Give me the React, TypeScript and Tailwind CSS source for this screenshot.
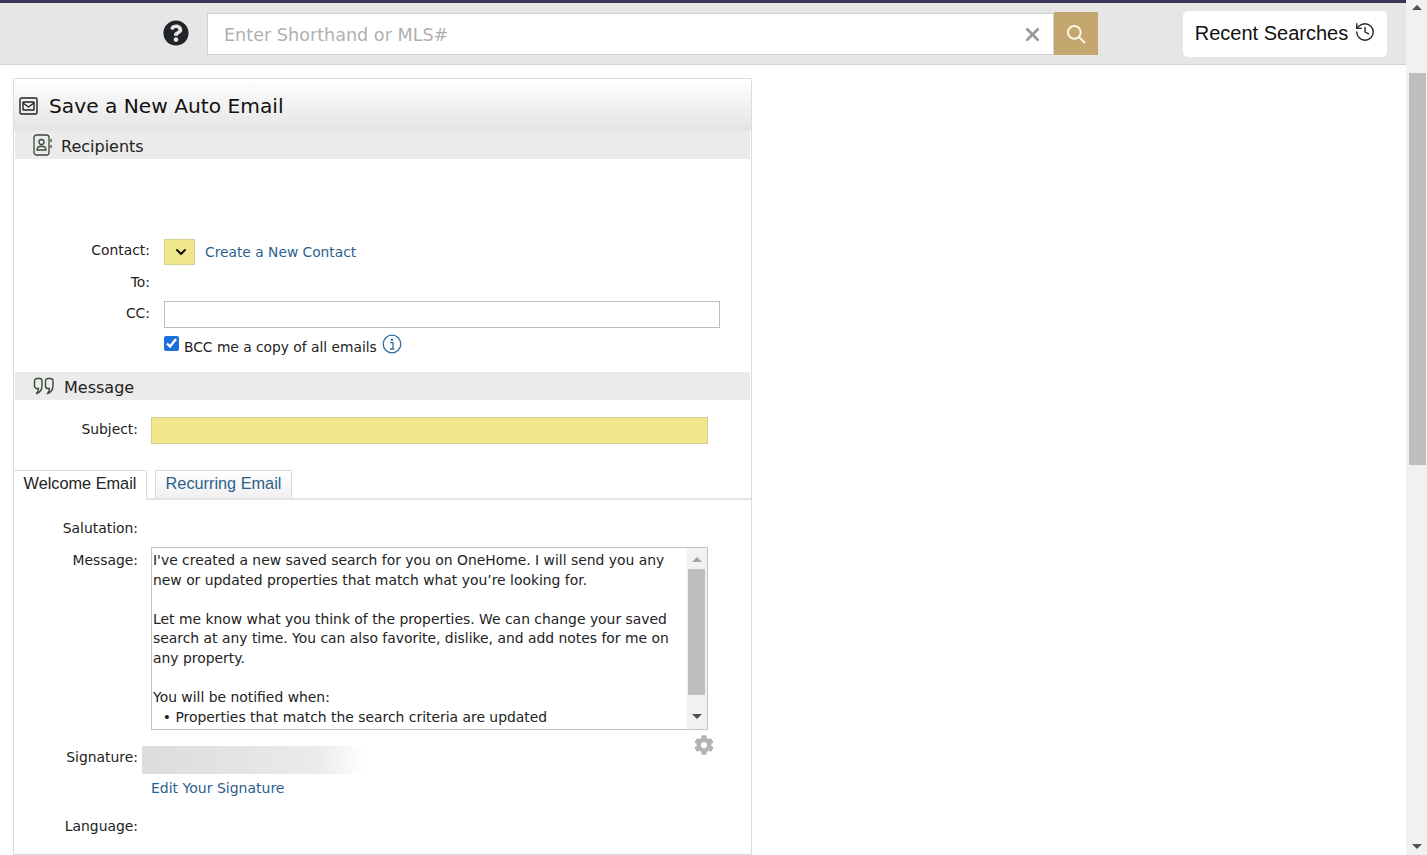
import { FaQuestionCircle, FaCog } from "react-icons/fa";
import { History, X, ChevronDown } from "lucide-react";

const verdana = "font-['DejaVu_Sans',Verdana,sans-serif]";

function Label({ w, children }: { w: string; children: string }) {
  return <div className={`${w} shrink-0 text-right text-[13.9px] leading-[20px] text-[#222]`}>{children}</div>;
}

function Band({ icon, title }: { icon: React.ReactNode; title: string }) {
  return (
    <div className="flex h-[28px] items-center gap-[9px] bg-[#ebebeb] pl-[18px] text-[16px] text-[#222]">
      {icon}
      <span className="pt-[3px]">{title}</span>
    </div>
  );
}

export default function App() {
  return (
    <div className={`flex h-[855px] w-[1427px] overflow-hidden bg-white ${verdana}`}>
      <div className="flex h-full w-[1406px] flex-col">
        <header className="h-[65px] shrink-0 border-t-[3px] border-b border-t-[#3a3559] border-b-[#d2d2d2] bg-[#e6e6e6]">
          <div className="flex items-start">
            <FaQuestionCircle className="ml-[163px] mt-[17px] h-[26px] w-[26px] text-[#212529]" />
            <div className="ml-[18px] mt-[10px] flex h-[42px] w-[847px] items-center border border-[#cfcfcf] bg-white pl-[16px] pr-[10px] text-[17.6px] text-[#b0b0b0]">
              <span className="flex-1 pt-[2px]">Enter Shorthand or MLS#</span>
              <X className="h-[21px] w-[21px] text-[#999]" strokeWidth={3} />
            </div>
            <button className="mt-[9px] flex h-[43px] w-[44px] items-center justify-center bg-[#c4a66f]">
              <svg width="20" height="20" viewBox="0 0 20 20" fill="none" stroke="#fdf6e6" strokeWidth="2" strokeLinecap="round">
                <circle cx="8.3" cy="8.3" r="6.4" />
                <path d="M13 13l5.5 5.5" />
              </svg>
            </button>
            <button className="ml-[85px] mt-[8px] flex h-[46px] w-[204px] items-center justify-center gap-[6px] rounded-[5px] bg-white pb-[2px] pl-[1px] font-['Liberation_Sans',Arial,sans-serif] text-[20px] text-[#111]">
              <span>Recent Searches</span>
              <History className="h-[22px] w-[22px] -translate-y-[1px] text-[#222]" strokeWidth={1.5} />
            </button>
          </div>
        </header>

        <main className="ml-[13px] mt-[13px] flex w-[739px] flex-1 flex-col border border-b-0 border-[#dcdcdc] text-[#222]">
          <div className="flex h-[52px] items-center gap-[11px] bg-gradient-to-b from-[#ffffff] to-[#e4e4e4] pl-[5px] pt-[2px] text-[20.2px] text-[#111]">
            <svg width="19" height="18" viewBox="0 0 19 18" fill="none" stroke="#222" strokeWidth="1.4">
              <rect x="1" y="1" width="17" height="16" rx="1.5" />
              <rect x="4" y="5" width="11" height="8" rx="0.5" />
              <path d="M4 6l5.5 4L15 6" />
            </svg>
            <span>Save a New Auto Email</span>
          </div>
          <div className="mx-px">
            <Band
              title="Recipients"
              icon={
                <svg width="19" height="22" viewBox="0 0 19 22" fill="none" stroke="#3b4a3b" strokeWidth="1.3">
                  <rect x="1" y="1" width="15" height="20" rx="2.5" />
                  <circle cx="8.5" cy="8" r="2.5" />
                  <path d="M4 16c0-5 9-5 9 0z" />
                  <path d="M18 5v3M18 11v3" />
                </svg>
              }
            />
          </div>

          <div className="mt-[80px] flex h-[26px] items-start">
            <div className="mt-px w-[136px]">
              <Label w="w-full">Contact:</Label>
            </div>
            <div className="ml-[14px] flex h-[26px] w-[31px] items-center justify-center border border-[#d8d090] bg-[#f0e68c] pl-[3px]">
              <ChevronDown className="h-[16px] w-[16px] text-[#111]" strokeWidth={3} />
            </div>
            <a className="ml-[10px] mt-[3px] text-[13.8px] leading-[20px] text-[#2c5f8d]">Create a New Contact</a>
          </div>

          <div className="mt-[7px] h-[20px]">
            <Label w="w-[136px]">To:</Label>
          </div>

          <div className="mt-[9px] flex h-[27px] items-start">
            <div className="mt-[2px]">
              <Label w="w-[136px]">CC:</Label>
            </div>
            <input className="ml-[14px] h-[27px] w-[556px] border border-[#bdbdbd] bg-white" />
          </div>

          <div className="ml-[150px] mt-[7px] flex h-[23px] items-start text-[13.8px]">
            <input type="checkbox" defaultChecked className="mt-[1px] h-[15px] w-[15px] accent-[#1b6fd8]" />
            <span className="ml-[5px] mt-[2px] leading-[20px] text-[#222]">BCC me a copy of all emails</span>
            <svg width="20" height="20" viewBox="0 0 20 20" fill="none" className="ml-[5px] -translate-y-[1px]">
              <circle cx="10" cy="10" r="8.8" stroke="#2f6ea5" strokeWidth="1.3" />
              <circle cx="10" cy="5.8" r="1.2" fill="#2f6ea5" />
              <path d="M8 8.7h3v6M8 15h4.2" stroke="#2f6ea5" strokeWidth="1.3" />
            </svg>
          </div>

          <div className="mx-px mt-[14px]">
            <Band
              title="Message"
              icon={
                <svg width="22" height="18" viewBox="0 0 22 18" fill="none" stroke="#3b4a3b" strokeWidth="1.4" strokeLinejoin="round">
                  <path d="M1.5 4a2.5 2.5 0 0 1 2.5-2.5h2.5A2.5 2.5 0 0 1 9 4v4.5c0 4-2 7-5.5 8 1.3-1.5 2-3 2-5H4a2.5 2.5 0 0 1-2.5-2.5z" />
                  <path d="M12.5 4A2.5 2.5 0 0 1 15 1.5h2.5A2.5 2.5 0 0 1 20 4v4.5c0 4-2 7-5.5 8 1.3-1.5 2-3 2-5H15a2.5 2.5 0 0 1-2.5-2.5z" />
                </svg>
              }
            />
          </div>

          <div className="mt-[17px] flex h-[27px] items-start">
            <div className="mt-[2px]">
              <Label w="w-[124px]">Subject:</Label>
            </div>
            <div className="ml-[13px] h-[27px] w-[557px] border border-[#d8d090] bg-[#f0e68c]" />
          </div>

          <div className="mt-[26px] flex h-[30px] items-end border-b-2 border-[#e4e4e4] font-['Liberation_Sans',Arial,sans-serif] text-[16.3px]">
            <div className="-mb-[2px] flex h-[30px] w-[133px] items-center justify-center border-r border-t border-[#dcdcdc] bg-white pb-[4px] text-[#222]">
              Welcome Email
            </div>
            <div className="ml-[8px] flex h-[28px] w-[137px] items-center justify-center border border-b-0 border-[#dcdcdc] bg-gradient-to-b from-[#ffffff] to-[#f0f0f0] pb-[2px] text-[#2c5f8d]">
              Recurring Email
            </div>
          </div>

          <div className="mt-[18px] h-[20px]">
            <Label w="w-[124px]">Salutation:</Label>
          </div>

          <div className="mt-[9px] flex items-start">
            <div className="mt-[3px]">
              <Label w="w-[124px]">Message:</Label>
            </div>
            <div className="ml-[13px] flex h-[183px] w-[557px] border border-[#c4c4c4]">
              <div className="flex-1 overflow-hidden whitespace-pre pl-[1px] pt-[3px] text-[13.9px] leading-[19.6px] text-[#222]">
                {"I've created a new saved search for you on OneHome. I will send you any\nnew or updated properties that match what you’re looking for.\n\nLet me know what you think of the properties. We can change your saved\nsearch at any time. You can also favorite, dislike, and add notes for me on\nany property.\n\nYou will be notified when:\n"}
                <span className="block pl-[1px]">{"  • Properties that match the search criteria are updated"}</span>
              </div>
              <div className="flex w-[20px] shrink-0 flex-col items-center bg-[#f1f1f1] pr-[1px]">
                <div className="mt-[9px] h-0 w-0 border-x-[5px] border-b-[5px] border-x-transparent border-b-[#a3a3a3]" />
                <div className="mt-[7px] h-[126px] w-[17px] bg-[#bebebe]" />
                <div className="mt-[19px] h-0 w-0 border-x-[5px] border-t-[5px] border-x-transparent border-t-[#505050]" />
              </div>
            </div>
          </div>

          <div className="flex h-[16px] justify-end pr-[37px] pt-[5px]">
            <FaCog className="h-[20px] w-[20px] shrink-0 text-[#b4b4b4]" />
          </div>

          <div className="flex h-[28px] items-start">
            <div className="mt-[1px]">
              <Label w="w-[124px]">Signature:</Label>
            </div>
            <div className="ml-[4px] h-[28px] w-[221px] bg-gradient-to-r from-[#dcdcdc] via-[#ebebeb] via-80% to-[#ffffff]" />
          </div>

          <a className="ml-[137px] mt-[4px] h-[20px] text-[14px] leading-[20px] text-[#2c5f8d]">Edit Your Signature</a>

          <div className="mt-[18px]">
            <Label w="w-[124px]">Language:</Label>
          </div>
        </main>
        <div className="ml-[13px] h-px w-[739px] shrink-0 bg-[#dcdcdc]" />
      </div>

      <aside className="flex h-full w-[21px] shrink-0 flex-col items-center border-l border-[#f3f3f3] bg-[#f1f1f1]">
        <div className="mt-[5px] h-0 w-0 border-x-[5px] border-b-[5px] border-x-transparent border-b-[#505050]" />
        <div className="mt-[63px] h-[392px] w-[17px] bg-[#bebebe]" />
        <div className="mb-[6px] mt-auto h-0 w-0 border-x-[5px] border-t-[5px] border-x-transparent border-t-[#505050]" />
      </aside>
    </div>
  );
}
